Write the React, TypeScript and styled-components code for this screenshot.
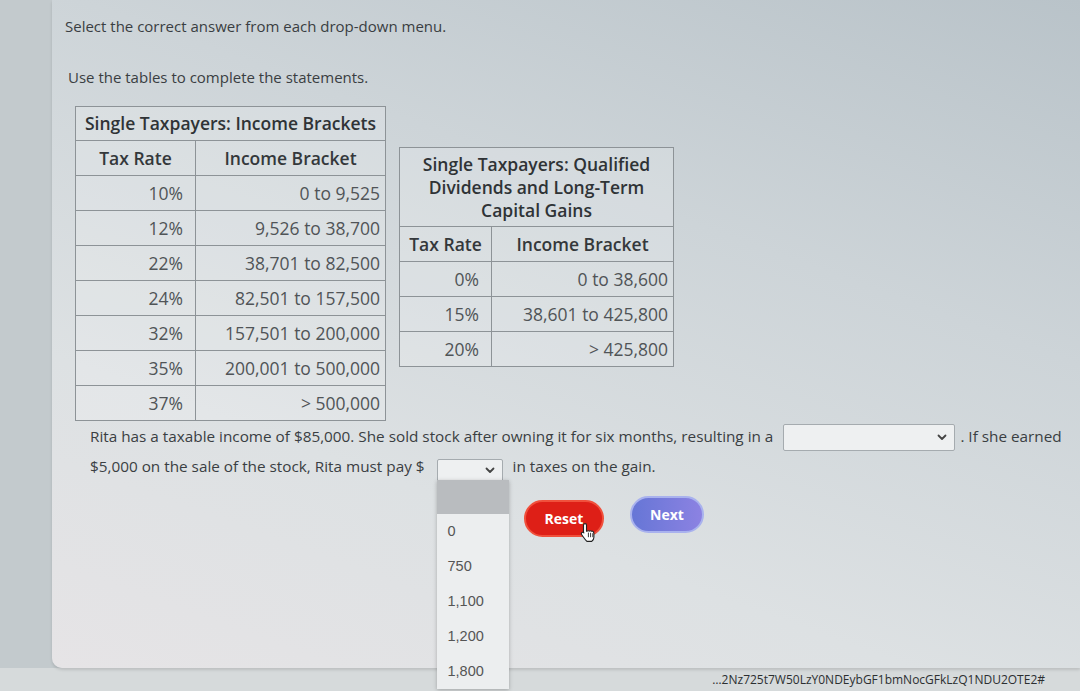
import styled, { createGlobalStyle } from "styled-components";

const GlobalStyle = createGlobalStyle`
    html, body {
        margin: 0;
        padding: 0;
        background: #c2c9cc;
        font-family: "Open Sans", "Liberation Sans", sans-serif;
    }
`;

const incomeBrackets = [
    ["10%", "0 to 9,525"],
    ["12%", "9,526 to 38,700"],
    ["22%", "38,701 to 82,500"],
    ["24%", "82,501 to 157,500"],
    ["32%", "157,501 to 200,000"],
    ["35%", "200,001 to 500,000"],
    ["37%", "> 500,000"],
];

const gainBrackets = [
    ["0%", "0 to 38,600"],
    ["15%", "38,601 to 425,800"],
    ["20%", "> 425,800"],
];

const taxOptions = ["0", "750", "1,100", "1,200", "1,800"];

const Chevron = () => (
    <svg width="10" height="7" viewBox="0 0 10 7">
        <path d="M1.5 1.5 L5 5 L8.5 1.5" fill="none" stroke="#444" strokeWidth="1.8" strokeLinecap="round" strokeLinejoin="round"/>
    </svg>
);

const HandCursor = () => (
    <svg width="17" height="21" viewBox="0 0 17 21">
        <path
            d="M5 1.6c.9 0 1.5.7 1.5 1.5v6.2l.6-.1c.6-.6 1.6-.6 2.2 0 .6-.5 1.6-.5 2.2.1.7-.4 1.7-.1 2 .7l.4 1.2v4.1c0 1.9-.9 3.3-2.3 4.1H6.9c-.8-.8-2.2-2.4-3.6-4.4L1.6 12.5c-.5-.7-.3-1.6.4-2 .6-.4 1.4-.2 1.9.3l-.4-.4V3.1C3.5 2.3 4.1 1.6 5 1.6z"
            fill="#fff" stroke="#222" strokeWidth="1.1" strokeLinejoin="round"/>
        <path d="M8.4 11v3.8M10.6 11.2v3.6M12.8 11.6v3.2" stroke="#222" strokeWidth="0.9" strokeLinecap="round"/>
    </svg>
);

const App = () => {
    return (
        <Screen>
            <GlobalStyle/>
            <Panel>
                <Instruction>Select the correct answer from each drop-down menu.</Instruction>
                <SubInstruction>Use the tables to complete the statements.</SubInstruction>

                <Tables>
                    <Table $width={310}>
                        <colgroup>
                            <col style={{width: 120}}/>
                            <col style={{width: 190}}/>
                        </colgroup>
                        <tbody>
                            <tr>
                                <TitleCell colSpan={2} $height={34}>Single Taxpayers: Income Brackets</TitleCell>
                            </tr>
                            <tr>
                                <HeadCell>Tax Rate</HeadCell>
                                <HeadCell>Income Bracket</HeadCell>
                            </tr>
                            {incomeBrackets.map(([rate, range]) => (
                                <tr key={rate}>
                                    <RateCell>{rate}</RateCell>
                                    <RangeCell>{range}</RangeCell>
                                </tr>
                            ))}
                        </tbody>
                    </Table>

                    <SecondTable $width={274}>
                        <colgroup>
                            <col style={{width: 92}}/>
                            <col style={{width: 182}}/>
                        </colgroup>
                        <tbody>
                            <tr>
                                <TitleCell colSpan={2} $height={79}>
                                    Single Taxpayers: Qualified<br/>
                                    Dividends and Long-Term<br/>
                                    Capital Gains
                                </TitleCell>
                            </tr>
                            <tr>
                                <HeadCell>Tax Rate</HeadCell>
                                <HeadCell>Income Bracket</HeadCell>
                            </tr>
                            {gainBrackets.map(([rate, range]) => (
                                <tr key={rate}>
                                    <RateCell>{rate}</RateCell>
                                    <RangeCell>{range}</RangeCell>
                                </tr>
                            ))}
                        </tbody>
                    </SecondTable>
                </Tables>

                <Statement>
                    Rita has a taxable income of $85,000. She sold stock after owning it for six months, resulting in a
                    <SelectBox $width={172} $height={27}>
                        <Chevron/>
                    </SelectBox>
                    . If she earned
                    <br/>
                    $5,000 on the sale of the stock, Rita must pay $
                    <SelectWrap>
                        <SelectBox $width={66} $height={23}>
                            <Chevron/>
                        </SelectBox>
                        <OptionList>
                            <OptionItem $highlighted/>
                            {taxOptions.map(option => (
                                <OptionItem key={option}>{option}</OptionItem>
                            ))}
                        </OptionList>
                    </SelectWrap>
                    in taxes on the gain.
                </Statement>

                <Buttons>
                    <PillButton $variant="reset">
                        Reset
                        <CursorSpot><HandCursor/></CursorSpot>
                    </PillButton>
                    <PillButton $variant="next">Next</PillButton>
                </Buttons>
            </Panel>

            <StatusBar>
                <StatusUrl>…2Nz725t7W50LzY0NDEybGF1bmNocGFkLzQ1NDU2OTE2#</StatusUrl>
            </StatusBar>
        </Screen>
    );
}

export default App;


const Screen = styled.div`
    width: 1080px;
    height: 691px;
    display: flex;
    flex-direction: column;
    overflow: hidden;
    background: #c3cacd;
`;

const Panel = styled.div`
    position: relative;
    flex: 1;
    margin-left: 52px;
    padding: 16px 0 0 13px;
    border-bottom-left-radius: 10px;
    background: linear-gradient(200deg, #b9c3c9 0%, #cdd4d8 35%, #dde1e3 70%, #e6e4e6 100%);
    box-shadow: 0 2px 3px rgba(0, 0, 0, .12);
`;

const Instruction = styled.p`
    margin: 0;
    font-size: 15px;
    line-height: 20px;
    color: #3a3e42;
`;

const SubInstruction = styled(Instruction)`
    margin-top: 31px;
    padding-left: 3px;
`;

const Tables = styled.div`
    display: flex;
    align-items: flex-start;
    gap: 13px;
    margin-top: 19px;
    padding-left: 10px;
`;

const Table = styled.table<{ $width: number }>`
    width: ${p => p.$width}px;
    table-layout: fixed;
    border-collapse: collapse;
    background: rgba(255, 255, 255, .18);
    border: 1px solid #8d9397;
`;

const SecondTable = styled(Table)`
    margin-top: 41px;
`;

const Cell = styled.td`
    border: 1px solid #8d9397;
    height: 35px;
    padding: 0;
    box-sizing: border-box;
    white-space: nowrap;
`;

const TitleCell = styled(Cell)<{ $height: number }>`
    height: ${p => p.$height}px;
    padding: 0 4px;
    text-align: center;
    font-size: 17.5px;
    font-weight: 600;
    line-height: 23px;
    color: #2f3336;
`;

const HeadCell = styled(Cell)`
    text-align: center;
    font-size: 17.5px;
    font-weight: 600;
    color: #34383b;
`;

const RateCell = styled(Cell)`
    text-align: right;
    padding-right: 12px;
    font-size: 17.5px;
    color: #505457;
`;

const RangeCell = styled(Cell)`
    text-align: right;
    padding-right: 5px;
    font-size: 17.5px;
    color: #505457;
`;

const Statement = styled.div`
    padding-left: 25px;
    font-size: 15.3px;
    line-height: 30px;
    color: #3a3e42;
    white-space: nowrap;
`;

const SelectWrap = styled.span`
    position: relative;
    display: inline-block;
    vertical-align: middle;
    margin: 0 10px 0 12px;
`;

const SelectBox = styled.span<{ $width: number; $height: number }>`
    display: inline-flex;
    align-items: center;
    justify-content: flex-end;
    box-sizing: border-box;
    width: ${p => p.$width}px;
    height: ${p => p.$height}px;
    padding-right: 7px;
    margin: 0 5px 0 10px;
    vertical-align: middle;
    background: #eef0f1;
    border: 1px solid #a5abaf;
    border-radius: 2px;

    ${SelectWrap} & {
        margin: 0;
    }
`;

const OptionList = styled.div`
    position: absolute;
    top: 27px;
    left: 0;
    width: 72px;
    background: #eceeef;
    box-shadow: 0 1px 4px rgba(0, 0, 0, .25);
    font-family: "Liberation Sans", Arial, sans-serif;
    z-index: 2;
`;

const OptionItem = styled.div<{ $highlighted?: boolean }>`
    height: ${p => p.$highlighted ? 34 : 35}px;
    line-height: 35px;
    padding-left: 11px;
    font-size: 14.5px;
    color: #555;
    background: ${p => p.$highlighted ? "#b9bcbf" : "transparent"};
`;

const Buttons = styled.div`
    display: flex;
    gap: 26px;
    margin-top: 17px;
    padding-left: 459px;
`;

const PillButton = styled.button<{ $variant: "reset" | "next" }>`
    position: relative;
    height: 37px;
    width: ${p => p.$variant === "reset" ? 80 : 74}px;
    border-radius: 19px;
    font-family: "Open Sans", sans-serif;
    font-size: 14px;
    font-weight: 700;
    color: #fff;
    cursor: pointer;
    ${p => p.$variant === "reset" ? `
        background: #de1f17;
        border: 2px solid #f0503c;
    ` : `
        margin-top: -4px;
        background: linear-gradient(90deg, #6676d6, #8c82e2);
        border: 2px solid #a9b2ee;
    `}
`;

const CursorSpot = styled.span`
    position: absolute;
    left: 54px;
    top: 20px;
    line-height: 0;
`;

const StatusBar = styled.div`
    height: 23px;
    display: flex;
    align-items: center;
    justify-content: flex-end;
    padding-right: 35px;
    background: #d6dadb;
`;

const StatusUrl = styled.span`
    font-family: "Open Sans", sans-serif;
    font-size: 12px;
    color: #2c2f31;
`;
